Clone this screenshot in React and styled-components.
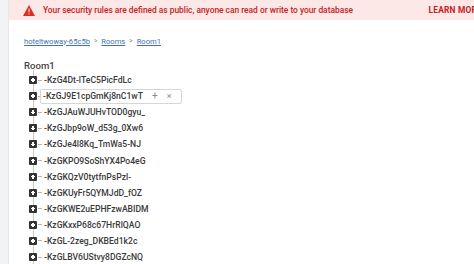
import React from 'react';
import styled, { createGlobalStyle } from 'styled-components';

const Global = createGlobalStyle`
  html, body { margin: 0; padding: 0; background: #fff; }
  body { font-family: Roboto, "Liberation Sans", sans-serif; overflow: hidden; }
`;

const Page = styled.div`
  display: flex;
  width: 474px;
  height: 264px;
  overflow: hidden;
`;

const Rail = styled.div`
  width: 8px;
  flex: none;
  background: #f1f3f4;
  border-right: 1px solid #e6e8ea;
`;

const Main = styled.div`
  flex: 1;
  min-width: 0;
  display: flex;
  flex-direction: column;
`;

const Banner = styled.div`
  height: 20px;
  flex: none;
  background: #fce8e6;
  display: flex;
  align-items: center;
  padding-left: 14px;
  color: #c5221f;
  font-size: 8.4px;
  font-weight: 500;
  white-space: nowrap;
  overflow: hidden;
`;

const Warn = styled.svg`
  width: 12px;
  height: 11px;
  margin-right: 8px;
  flex: none;
`;

const LearnMore = styled.span`
  margin-left: auto;
  margin-right: -8px;
  font-weight: 700;
  letter-spacing: 0.2px;
`;

const Content = styled.div`
  padding: 15px 0 0 15px;
`;

const Crumbs = styled.div`
  display: flex;
  align-items: center;
  gap: 4px;
  font-size: 7.6px;
  height: 12px;
`;

const Crumb = styled.a`
  color: #3f72af;
  text-decoration: underline;
`;

const Sep = styled.span`
  color: #8a8a8a;
  font-size: 6.5px;
`;

const RootName = styled.div`
  margin-top: 13px;
  font-size: 9.6px;
  font-weight: 500;
  color: #444;
  height: 12px;
`;

const Tree = styled.div`
  position: relative;
  margin-left: 5px;
  &::before {
    content: '';
    position: absolute;
    left: 4px;
    top: -2px;
    bottom: -40px;
    width: 1px;
    background: #c6c6c6;
  }
`;

const Row = styled.div`
  position: relative;
  display: flex;
  align-items: center;
  height: 16.1px;
`;

const Toggle = styled.span`
  position: relative;
  z-index: 1;
  width: 8px;
  height: 8px;
  flex: none;
  background: #333;
  border-radius: 1px;
  display: flex;
  align-items: center;
  justify-content: center;
  &::before, &::after {
    content: '';
    position: absolute;
    background: #fff;
  }
  &::before { width: 4px; height: 1.4px; }
  &::after { width: 1.4px; height: 4px; }
`;

const Dash = styled.span`
  width: 4px;
  height: 1px;
  background: #b5b5b5;
  margin-left: 1px;
  flex: none;
`;

const Key = styled.span`
  font-size: 8.6px;
  font-weight: 500;
  color: #3a3a3a;
  padding-left: 2px;
  white-space: nowrap;
`;

const Editing = styled.div`
  display: flex;
  align-items: center;
  margin-left: -2px;
  width: 142px;
  height: 15px;
  box-sizing: border-box;
  border: 1px solid #d6d6d6;
  border-radius: 2px;
  background: #fff;
`;

const Action = styled.span`
  color: #8a8a8a;
  font-size: ${p => p.size}px;
  margin-left: ${p => p.gap}px;
  line-height: 1;
`;

const keys = [
  '-KzG4Dt-lTeC5PicFdLc',
  '-KzGJ9E1cpGmKj8nC1wT',
  '-KzGJAuWJUHvTOD0gyu_',
  '-KzGJbp9oW_d53g_0Xw6',
  '-KzGJe4l8Kq_TmWa5-NJ',
  '-KzGKPO9SoShYX4Po4eG',
  '-KzGKQzV0tytfnPsPzl-',
  '-KzGKUyFr5QYMJdD_fOZ',
  '-KzGKWE2uEPHFzwABIDM',
  '-KzGKxxP68c67HrRlQAO',
  '-KzGL-2zeg_DKBEd1k2c',
  '-KzGLBV6UStvy8DGZcNQ',
];

export default function App() {
  return (
    <Page>
      <Global />
      <Rail />
      <Main>
        <Banner>
          <Warn viewBox="0 0 24 22">
            <path d="M12 0 L24 22 H0 Z" fill="#d93025" />
            <rect x="11" y="7" width="2" height="8" fill="#fce8e6" />
            <rect x="11" y="17" width="2" height="2" fill="#fce8e6" />
          </Warn>
          Your security rules are defined as public, anyone can read or write to your database
          <LearnMore>LEARN MORE</LearnMore>
        </Banner>
        <Content>
          <Crumbs>
            <Crumb>hoteltwoway-65c5b</Crumb>
            <Sep>&gt;</Sep>
            <Crumb>Rooms</Crumb>
            <Sep>&gt;</Sep>
            <Crumb>Room1</Crumb>
          </Crumbs>
          <RootName>Room1</RootName>
          <Tree>
            {keys.map((k, i) => (
              <Row key={k}>
                <Toggle />
                <Dash />
                {i === 1 ? (
                  <Editing>
                    <Key>{k}</Key>
                    <Action size={10} gap={9}>+</Action>
                    <Action size={9} gap={9}>×</Action>
                  </Editing>
                ) : (
                  <Key>{k}</Key>
                )}
              </Row>
            ))}
          </Tree>
        </Content>
      </Main>
    </Page>
  );
}
